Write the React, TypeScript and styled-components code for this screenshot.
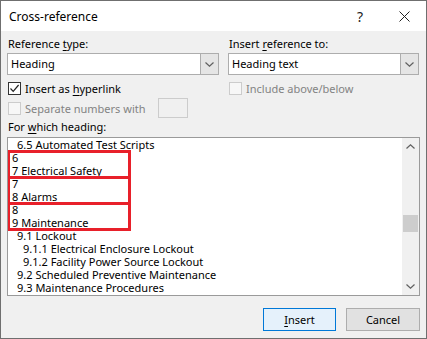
import styled, { createGlobalStyle } from 'styled-components';

const GlobalStyle = createGlobalStyle`
  html, body {
    margin: 0;
    padding: 0;
    background: #ffffff;
  }

  body {
    font-family: 'Noto Sans', 'Segoe UI', sans-serif;
    font-size: 11px;
    color: #000000;
  }
`;

const Dialog = styled.div`
  width: 427px;
  height: 339px;
  box-sizing: border-box;
  border: 1px solid #6f6f6f;
  background: #f0f0f0;
  display: flex;
  flex-direction: column;
`;

const TitleBar = styled.div`
  height: 30px;
  background: #ffffff;
  display: flex;
  align-items: center;
  padding-left: 8px;
`;

const Title = styled.div`
  flex: 1;
  font-size: 12px;
`;

const TitleButton = styled.div`
  width: 44px;
  height: 30px;
  display: flex;
  align-items: center;
  justify-content: center;
  font-size: 14px;
  color: #222;
`;

const Body = styled.div`
  flex: 1;
  display: flex;
  flex-direction: column;
  padding: 5px 6px 7px 6px;
`;

const Columns = styled.div`
  display: grid;
  grid-template-columns: 212px 191px;
  column-gap: 9px;
`;

const Field = styled.div`
  display: flex;
  flex-direction: column;
`;

const Label = styled.div`
  height: 16px;
  line-height: 16px;
  padding-left: 1px;
  white-space: nowrap;

  u {
    text-underline-offset: 2px;
  }
`;

const ListLabel = styled(Label)`
  margin-top: 1px;
`;

const Select = styled.div`
  margin-top: 1px;
  height: 22px;
  box-sizing: border-box;
  border: 1px solid #adadad;
  display: flex;
  margin-bottom: 3px;
`;

const SelectValue = styled.div`
  flex: 1;
  background: #ffffff;
  line-height: 20px;
  padding-left: 3px;
`;

const DropButton = styled.div`
  width: 17px;
  background: #e5e5e5;
  border-left: 1px solid #adadad;
  display: flex;
  align-items: center;
  justify-content: center;
`;

const CheckRow = styled.div<{ disabled?: boolean }>`
  height: 20px;
  display: flex;
  align-items: center;
  gap: 4px;
  padding-left: 1px;
  color: ${(p) => (p.disabled ? '#838383' : '#000000')};
  white-space: nowrap;

  u {
    text-underline-offset: 2px;
  }
`;

const Box = styled.div<{ disabled?: boolean }>`
  width: 13px;
  height: 13px;
  box-sizing: border-box;
  border: 1px solid ${(p) => (p.disabled ? '#cccccc' : '#333333')};
  background: ${(p) => (p.disabled ? '#f7f7f7' : '#ffffff')};
  display: flex;
  align-items: center;
  justify-content: center;
`;

const CheckText = styled.span<{ width?: number }>`
  width: ${(p) => (p.width ? `${p.width}px` : 'auto')};
`;

const SpinBox = styled.div`
  width: 30px;
  height: 20px;
  box-sizing: border-box;
  border: 1px solid #cccccc;
  background: #f0f0f0;
`;

const ListBox = styled.div`
  margin-top: 2px;
  height: 159px;
  box-sizing: border-box;
  border: 1px solid #9a9a9a;
  display: flex;
`;

const Items = styled.div`
  flex: 1;
  background: #ffffff;
  overflow: hidden;
`;

const Item = styled.div<{ level: number }>`
  height: 13px;
  line-height: 13px;
  white-space: nowrap;
  padding-left: ${(p) => [4, 9, 15][p.level - 1]}px;
`;

const Marked = styled.div`
  position: relative;

  &::after {
    content: '';
    position: absolute;
    left: -1px;
    top: -1px;
    width: 124px;
    height: 29px;
    box-sizing: border-box;
    border: 3px solid #e8202a;
    pointer-events: none;
  }
`;

const ScrollBar = styled.div`
  width: 17px;
  background: #f0f0f0;
  display: flex;
  flex-direction: column;
`;

const ScrollArrow = styled.div`
  height: 17px;
  display: flex;
  align-items: center;
  justify-content: center;
`;

const Track = styled.div`
  flex: 1;
  display: flex;
  flex-direction: column;
`;

const Thumb = styled.div`
  margin: 60px 0 0 1px;
  width: 15px;
  height: 17px;
  background: #cdcdcd;
`;

const Buttons = styled.div`
  margin-top: 12px;
  display: flex;
  justify-content: flex-end;
  gap: 10px;
`;

const Button = styled.div<{ primary?: boolean }>`
  width: ${(p) => (p.primary ? 73 : 74)}px;
  height: 23px;
  box-sizing: border-box;
  border: 1px solid ${(p) => (p.primary ? '#0078d7' : '#adadad')};
  background: ${(p) => (p.primary ? '#e5f1fb' : '#e1e1e1')};
  display: flex;
  align-items: center;
  justify-content: center;

  u {
    text-underline-offset: 2px;
  }
`;

function Chevron({ up }: { up?: boolean }) {
  return (
    <svg width="9" height="5" viewBox="0 0 9 5">
      <path
        d={up ? 'M0.5 4.5 L4.5 0.8 L8.5 4.5' : 'M0.5 0.5 L4.5 4.2 L8.5 0.5'}
        fill="none"
        stroke="#606060"
        strokeWidth="1.2"
      />
    </svg>
  );
}

function CheckMark() {
  return (
    <svg width="11" height="11" viewBox="0 0 11 11">
      <path d="M1.5 5.5 L4.2 8.3 L9.6 2" fill="none" stroke="#222" strokeWidth="1.2" />
    </svg>
  );
}

const headings: { text: string; level: number }[] = [
  { text: '9.1 Lockout', level: 2 },
  { text: '9.1.1 Electrical Enclosure Lockout', level: 3 },
  { text: '9.1.2 Facility Power Source Lockout', level: 3 },
  { text: '9.2 Scheduled Preventive Maintenance', level: 2 },
  { text: '9.3 Maintenance Procedures', level: 2 },
];

const marked: [string, string][] = [
  ['6', '7 Electrical Safety'],
  ['7', '8 Alarms'],
  ['8', '9 Maintenance'],
];

export default function App() {
  return (
    <>
      <GlobalStyle />
      <Dialog>
        <TitleBar>
          <Title>Cross-reference</Title>
          <TitleButton>?</TitleButton>
          <TitleButton>
            <svg width="11" height="11" viewBox="0 0 11 11">
              <path d="M0.5 0.5 L10.5 10.5 M10.5 0.5 L0.5 10.5" stroke="#222" strokeWidth="1" />
            </svg>
          </TitleButton>
        </TitleBar>

        <Body>
          <Columns>
            <Field>
              <Label>
                Reference <u>t</u>ype:
              </Label>
              <Select>
                <SelectValue>Heading</SelectValue>
                <DropButton>
                  <Chevron />
                </DropButton>
              </Select>
              <CheckRow>
                <Box>
                  <CheckMark />
                </Box>
                <span>
                  Insert as <u>h</u>yperlink
                </span>
              </CheckRow>
              <CheckRow disabled>
                <Box disabled />
                <CheckText width={129}>Separate numbers with</CheckText>
                <SpinBox />
              </CheckRow>
            </Field>

            <Field>
              <Label>
                Insert <u>r</u>eference to:
              </Label>
              <Select>
                <SelectValue>Heading text</SelectValue>
                <DropButton>
                  <Chevron />
                </DropButton>
              </Select>
              <CheckRow disabled>
                <Box disabled />
                <span>Include above/below</span>
              </CheckRow>
            </Field>
          </Columns>

          <ListLabel>
            For <u>w</u>hich heading:
          </ListLabel>

          <ListBox>
            <Items>
              <Item level={2}>6.5 Automated Test Scripts</Item>
              {marked.map(([a, b]) => (
                <Marked key={a}>
                  <Item level={1}>{a}</Item>
                  <Item level={1}>{b}</Item>
                </Marked>
              ))}
              {headings.map((h) => (
                <Item key={h.text} level={h.level}>
                  {h.text}
                </Item>
              ))}
            </Items>
            <ScrollBar>
              <ScrollArrow>
                <Chevron up />
              </ScrollArrow>
              <Track>
                <Thumb />
              </Track>
              <ScrollArrow>
                <Chevron />
              </ScrollArrow>
            </ScrollBar>
          </ListBox>

          <Buttons>
            <Button primary>
              <span>
                <u>I</u>nsert
              </span>
            </Button>
            <Button>Cancel</Button>
          </Buttons>
        </Body>
      </Dialog>
    </>
  );
}
